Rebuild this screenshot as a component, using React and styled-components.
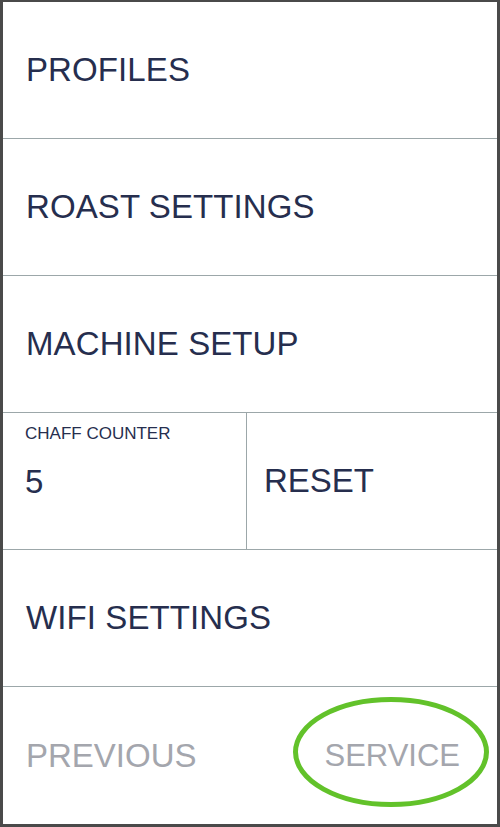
import React from 'react';
import styled, { createGlobalStyle } from 'styled-components';

const GlobalStyle = createGlobalStyle`
  html, body {
    margin: 0;
    padding: 0;
    background: #ffffff;
  }
  body {
    font-family: "Liberation Sans", Arial, sans-serif;
  }
`

const Frame = styled.div`
  box-sizing: border-box;
  width: 500px;
  height: 827px;
  border: 3px solid #4a4a4a;
  border-top-width: 2px;
  background: #fff;
  display: flex;
  flex-direction: column;
`

const MenuRow = styled.div`
  box-sizing: border-box;
  height: 137px;
  flex-shrink: 0;
  border-bottom: 1.5px solid #9ca7a9;
  display: flex;
  align-items: center;
  padding-left: 23px;
  color: #262e4e;
  font-size: 33px;
  letter-spacing: 0.1px;
`

const SplitRow = styled.div`
  box-sizing: border-box;
  height: 137px;
  flex-shrink: 0;
  border-bottom: 1.5px solid #9ca7a9;
  display: grid;
  grid-template-columns: 244px 1fr;
`

const CounterCell = styled.div`
  border-right: 1.5px solid #9ca7a9;
  display: flex;
  flex-direction: column;
  padding: 11px 0 0 22px;
  color: #262e4e;
`

const CounterLabel = styled.div`
  font-size: 17px;
  line-height: 19px;
`

const CounterValue = styled.div`
  font-size: 33px;
  line-height: 38px;
  margin-top: 20px;
`

const ResetCell = styled.div`
  display: flex;
  align-items: center;
  padding-left: 17px;
  color: #262e4e;
  font-size: 33px;
`

const FooterRow = styled.div`
  flex: 1;
  position: relative;
  display: flex;
  align-items: center;
  justify-content: space-between;
  padding: 0 37px 0 23px;
  color: #a4a6ad;
`

const FooterLink = styled.span`
  font-size: ${p => p.size}px;
`

const Highlight = styled.svg`
  position: absolute;
  left: 288px;
  top: 8px;
  width: 200px;
  height: 115px;
  pointer-events: none;
`

export default function App() {
  return (
    <>
      <GlobalStyle />
      <Frame>
        <MenuRow>PROFILES</MenuRow>
        <MenuRow>ROAST SETTINGS</MenuRow>
        <MenuRow>MACHINE SETUP</MenuRow>
        <SplitRow>
          <CounterCell>
            <CounterLabel>CHAFF COUNTER</CounterLabel>
            <CounterValue>5</CounterValue>
          </CounterCell>
          <ResetCell>RESET</ResetCell>
        </SplitRow>
        <MenuRow>WIFI SETTINGS</MenuRow>
        <FooterRow>
          <FooterLink size={33}>PREVIOUS</FooterLink>
          <FooterLink size={31}>SERVICE</FooterLink>
          <Highlight viewBox="0 0 200 115">
            <ellipse cx="100" cy="57" rx="95.5" ry="52.5" fill="none" stroke="#62c22a" strokeWidth="5" />
          </Highlight>
        </FooterRow>
      </Frame>
    </>
  );
}
